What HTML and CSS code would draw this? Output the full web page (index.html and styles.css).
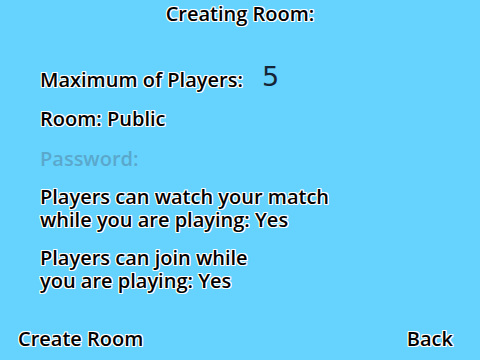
FILE: index.html
```html
<!DOCTYPE html>
<html>
<head>
<meta charset="utf-8">
<link rel="stylesheet" href="styles.css">
</head>
<body>
<div class="screen">
  <h1 class="title">Creating Room:</h1>
  <div class="options">
    <div class="row row-max"><span class="label">Maximum of Players:</span><span class="value">5</span></div>
    <div class="row row-room"><span class="label">Room: Public</span></div>
    <div class="row row-pass"><span class="label disabled">Password:</span></div>
    <div class="row row-watch"><span class="label">Players can watch your match<br>while you are playing: Yes</span></div>
    <div class="row row-join"><span class="label">Players can join while<br>you are playing: Yes</span></div>
  </div>
  <div class="footer">
    <span class="label">Create Room</span>
    <span class="label">Back</span>
  </div>
</div>
</body>
</html>
```
FILE: styles.css
```css
html, body {
  margin: 0;
  padding: 0;
}
body {
  background: #66d3fe;
  width: 480px;
  height: 360px;
  overflow: hidden;
}
.screen {
  width: 480px;
  height: 360px;
  display: flex;
  flex-direction: column;
  font-family: "Open Sans", "Noto Sans", sans-serif;
  font-weight: 600;
  font-size: 20px;
  line-height: 23px;
  color: #000;
}
.label {
  text-shadow: 1px 0 0 #fff, -1px 0 0 #fff, 0 1px 0 #fff, 0 -1px 0 #fff,
    1px 1px 0 #fff, -1px -1px 0 #fff, 1px -1px 0 #fff, -1px 1px 0 #fff;
}
.label.disabled {
  color: #5aa8cc;
  text-shadow: none;
}
.title {
  margin: 2px 0 0;
  font-size: 20px;
  font-weight: 600;
  line-height: 23px;
  text-align: center;
  text-shadow: 1px 0 0 #fff, -1px 0 0 #fff, 0 1px 0 #fff, 0 -1px 0 #fff,
    1px 1px 0 #fff, -1px -1px 0 #fff, 1px -1px 0 #fff, -1px 1px 0 #fff;
}
.options {
  padding-left: 40px;
  margin-top: 41px;
  display: flex;
  flex-direction: column;
}
.row {
  display: flex;
  align-items: baseline;
}
.row-room { margin-top: 16px; }
.row-pass { margin-top: 17px; }
.row-watch { margin-top: 15px; }
.row-join { margin-top: 15px; }
.value {
  font-family: "DejaVu Sans", sans-serif;
  font-weight: 400;
  font-size: 27px;
  line-height: 23px;
  color: #152535;
  margin-left: 19px;
  position: relative;
  top: -1px;
}
.footer {
  margin-top: auto;
  margin-bottom: 10px;
  display: flex;
  justify-content: space-between;
  padding: 0 27px 0 18px;
}
```
